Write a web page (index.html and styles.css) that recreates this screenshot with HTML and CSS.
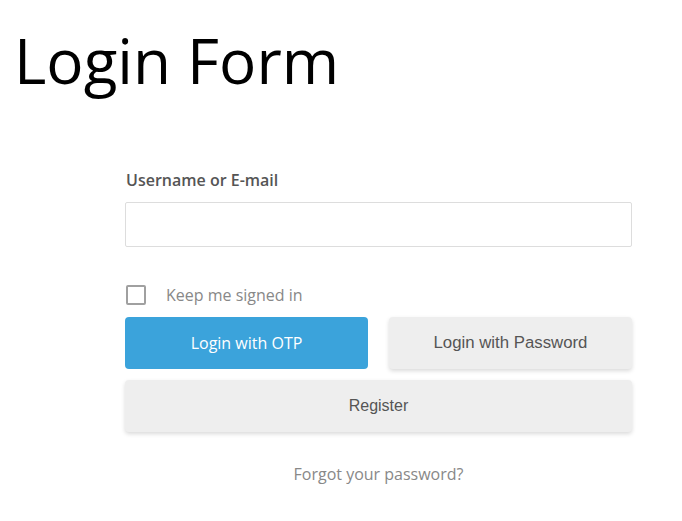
FILE: index.html
```html
<!DOCTYPE html>
<html>
<head>
<meta charset="utf-8">
<link rel="stylesheet" href="styles.css">
</head>
<body>
<h1 class="title">Login Form</h1>
<form class="login">
  <label class="label" for="user">Username or E-mail</label>
  <input class="input" id="user" type="text">
  <label class="keep"><span class="box"></span><span class="keep-text">Keep me signed in</span></label>
  <div class="row">
    <button type="button" class="btn btn-primary">Login with OTP</button>
    <button type="button" class="btn btn-light btn-pass">Login with Password</button>
  </div>
  <button type="button" class="btn btn-light btn-full">Register</button>
  <a class="forgot" href="#">Forgot your password?</a>
</form>
</body>
</html>
```
FILE: styles.css
```css
html, body { margin: 0; padding: 0; background: #fff; }
body { font-family: "Open Sans", "Noto Sans", sans-serif; }
.title {
  margin: 0;
  padding: 20px 0 0 14px;
  font-family: "Open Sans", "Noto Sans", sans-serif;
  font-weight: 400;
  font-size: 62px;
  line-height: 80px;
  color: #000;
}
.login {
  width: 507px;
  margin: 70px 0 0 125px;
  display: flex;
  flex-direction: column;
}
.label {
  font-size: 16px;
  font-weight: 600;
  color: #555;
  line-height: 20px;
  margin-left: 1px;
}
.input {
  margin-top: 12px;
  height: 45px;
  box-sizing: border-box;
  border: 1px solid #ddd;
  border-radius: 2px;
  outline: none;
}
.keep {
  margin-top: 38px;
  display: flex;
  align-items: center;
  height: 20px;
}
.box {
  width: 20px;
  height: 20px;
  box-sizing: border-box;
  border: 2px solid #a0a0a0;
  border-radius: 2px;
  margin-left: 1px;
}
.keep-text {
  margin-left: 20px;
  font-size: 16px;
  color: #888;
}
.row {
  margin-top: 12px;
  display: flex;
  gap: 21px;
}
.btn {
  height: 52px;
  border: none;
  border-radius: 4px;
  font-size: 16px;
  cursor: pointer;
}
.row .btn { flex: 1; }
.btn-primary {
  background: #3ba3db;
  color: #fff;
  font-family: "Open Sans", "Noto Sans", sans-serif;
}
.btn-light {
  background: #eeeeee;
  color: #555;
  font-family: "Liberation Sans", Arial, sans-serif;
  box-shadow: 0 2px 4px rgba(0,0,0,0.15);
}
.btn-pass { font-size: 16.8px; }
.btn-full { margin-top: 11px; }
.forgot {
  margin-top: 31px;
  align-self: center;
  font-size: 16px;
  color: #888;
  text-decoration: none;
}
```
